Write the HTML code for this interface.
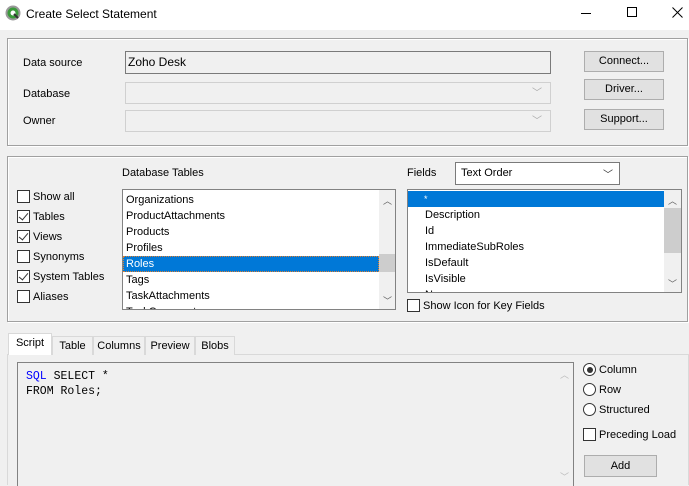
<!DOCTYPE html>
<html><head><style>
*{box-sizing:border-box;margin:0;padding:0}
body{width:689px;height:485px;background:#f0f0f0;font-family:"Liberation Sans",sans-serif;font-size:11px;color:#000;position:relative;overflow:hidden}
.a{position:absolute}
.grp{position:absolute;border:1px solid #a0a0a0;box-shadow:inset 1px 1px 0 #fff,1px 1px 0 #fff}
.btn{position:absolute;background:#e1e1e1;border:1px solid #adadad;text-align:center;line-height:19px}
.cb{position:absolute;width:13px;height:13px;border:1px solid #333;background:#fff}
.cb.c::after{content:"";position:absolute;left:3px;top:0px;width:4px;height:8px;border:solid #333;border-width:0 1.5px 1.5px 0;transform:rotate(40deg)}
.rb{position:absolute;width:13px;height:13px;border:1px solid #333;border-radius:50%;background:#fff}
.rb.c::after{content:"";position:absolute;left:2.5px;top:2.5px;width:6px;height:6px;border-radius:50%;background:#333}
.list{position:absolute;background:#fff;border:1px solid #828282;overflow:hidden}
.row{height:16px;line-height:16px;padding-left:3px;white-space:nowrap}
.sel{background:#0078d7;color:#fff}
.tab{position:absolute;top:336px;height:19px;border:1px solid #d9d9d9;border-bottom:none;background:#f0f0f0;line-height:18px;text-align:center}
.arr{position:absolute;color:#606060;font-size:9px;text-align:center;width:17px}
</style></head><body>
<div class="a" style="left:0;top:0;width:689px;height:30px;background:#fff"></div>
<svg class="a" style="left:5px;top:5px" width="16" height="16"><circle cx="8" cy="8" r="7.5" fill="#999"/><circle cx="8" cy="8" r="5.5" fill="#3a9a3a"/><circle cx="8" cy="8" r="2.5" fill="#fff"/><path d="M9 9l4 4" stroke="#333" stroke-width="2"/></svg>
<div class="a" style="left:26px;top:7px;font-size:12px">Create Select Statement</div>
<div class="a" style="left:581px;top:13px;width:10px;height:1px;background:#000"></div>
<div class="a" style="left:627px;top:7px;width:10px;height:10px;border:1px solid #000"></div>
<svg class="a" style="left:672px;top:7px" width="11" height="11"><path d="M0.5 0.5L10.5 10.5M10.5 0.5L0.5 10.5" stroke="#000" stroke-width="1"/></svg>

<div class="grp" style="left:7px;top:38px;width:681px;height:108px"></div>
<div class="a" style="left:23px;top:57px">Data source</div>
<div class="a" style="left:125px;top:51px;width:426px;height:23px;border:1px solid #7a7a7a;font-size:12px;padding:3px 2px">Zoho Desk</div>
<div class="a" style="left:23px;top:88px">Database</div>
<div class="a" style="left:125px;top:82px;width:426px;height:22px;border:1px solid #d0d0d0"></div>
<div class="a" style="left:532px;top:84px;color:#aaa;font-size:10px">﹀</div>
<div class="a" style="left:23px;top:115px">Owner</div>
<div class="a" style="left:125px;top:110px;width:426px;height:22px;border:1px solid #d0d0d0"></div>
<div class="a" style="left:532px;top:112px;color:#aaa;font-size:10px">﹀</div>
<div class="btn" style="left:584px;top:51px;width:80px;height:21px">Connect...</div>
<div class="btn" style="left:584px;top:79px;width:80px;height:21px">Driver...</div>
<div class="btn" style="left:584px;top:109px;width:80px;height:21px">Support...</div>

<div class="grp" style="left:7px;top:156px;width:681px;height:166px"></div>
<div class="cb" style="left:17px;top:190px"></div><div class="a" style="left:33px;top:191px">Show all</div>
<div class="cb c" style="left:17px;top:210px"></div><div class="a" style="left:33px;top:211px">Tables</div>
<div class="cb c" style="left:17px;top:230px"></div><div class="a" style="left:33px;top:231px">Views</div>
<div class="cb" style="left:17px;top:250px"></div><div class="a" style="left:33px;top:251px">Synonyms</div>
<div class="cb c" style="left:17px;top:270px"></div><div class="a" style="left:33px;top:271px">System Tables</div>
<div class="cb" style="left:17px;top:290px"></div><div class="a" style="left:33px;top:291px">Aliases</div>

<div class="a" style="left:122px;top:167px">Database Tables</div>
<div class="list" style="left:122px;top:189px;width:274px;height:121px;padding-top:2px">
<div class="row">Organizations</div><div class="row">ProductAttachments</div><div class="row">Products</div><div class="row">Profiles</div>
<div class="row sel" style="width:256px;outline:1px dotted #e08030;outline-offset:-1px">Roles</div><div class="row">Tags</div><div class="row">TaskAttachments</div><div class="row">TaskComments</div>
<div class="a" style="left:256px;top:0;width:17px;height:120px;background:#f0f0f0"></div>
<div class="a" style="left:256px;top:64px;width:17px;height:18px;background:#cdcdcd"></div>
<div class="arr" style="left:256px;top:4px">︿</div><div class="arr" style="left:256px;top:104px">﹀</div>
</div>

<div class="a" style="left:407px;top:167px">Fields</div>
<div class="a" style="left:455px;top:162px;width:165px;height:23px;border:1px solid #7a7a7a;background:#fff;padding:4px 5px">Text Order</div>
<div class="a" style="left:603px;top:166px;font-size:10px;color:#333">﹀</div>
<div class="list" style="left:407px;top:189px;width:275px;height:104px;padding-top:1px">
<div class="row sel" style="width:256px;padding-left:16px;font-size:9px">*</div>
<div class="row" style="padding-left:17px">Description</div><div class="row" style="padding-left:17px">Id</div><div class="row" style="padding-left:17px">ImmediateSubRoles</div><div class="row" style="padding-left:17px">IsDefault</div><div class="row" style="padding-left:17px">IsVisible</div><div class="row" style="padding-left:17px">Name</div>
<div class="a" style="left:256px;top:0;width:17px;height:103px;background:#f0f0f0"></div>
<div class="a" style="left:256px;top:18px;width:17px;height:45px;background:#cdcdcd"></div>
<div class="arr" style="left:256px;top:4px">︿</div><div class="arr" style="left:256px;top:87px">﹀</div>
</div>
<div class="cb" style="left:407px;top:299px"></div><div class="a" style="left:423px;top:300px">Show Icon for Key Fields</div>

<div class="a" style="left:7px;top:354px;width:682px;height:131px;border:1px solid #d9d9d9;background:#fff"></div>
<div class="a" style="left:8px;top:355px;width:680px;height:130px;background:#f0f0f0"></div>
<div class="tab" style="left:52px;width:41px">Table</div>
<div class="tab" style="left:93px;width:52px">Columns</div>
<div class="tab" style="left:145px;width:50px">Preview</div>
<div class="tab" style="left:195px;width:40px">Blobs</div>
<div class="tab" style="left:8px;top:333px;width:44px;height:23px;background:#fff;border-color:#d9d9d9">Script</div>
<div class="a" style="left:8px;top:355px;width:680px;height:130px;background:#f0f0f0"></div>
<div class="a" style="left:17px;top:362px;width:557px;height:124px;border:1px solid #828282;border-bottom:none;background:#f0f0f0;font-family:'Liberation Mono',monospace;font-size:11.5px;padding:6px 8px;line-height:15px">
<span style="color:#0000ff">SQL</span> SELECT *<br>FROM Roles;
<div class="arr" style="left:538px;top:6px;color:#bbb">︿</div><div class="arr" style="left:538px;top:108px;color:#bbb">﹀</div>
</div>
<div class="rb c" style="left:583px;top:363px"></div><div class="a" style="left:599px;top:364px">Column</div>
<div class="rb" style="left:583px;top:383px"></div><div class="a" style="left:599px;top:384px">Row</div>
<div class="rb" style="left:583px;top:403px"></div><div class="a" style="left:599px;top:404px">Structured</div>
<div class="cb" style="left:583px;top:428px"></div><div class="a" style="left:599px;top:429px">Preceding Load</div>
<div class="btn" style="left:584px;top:455px;width:73px;height:22px;line-height:20px">Add</div>
</body></html>
